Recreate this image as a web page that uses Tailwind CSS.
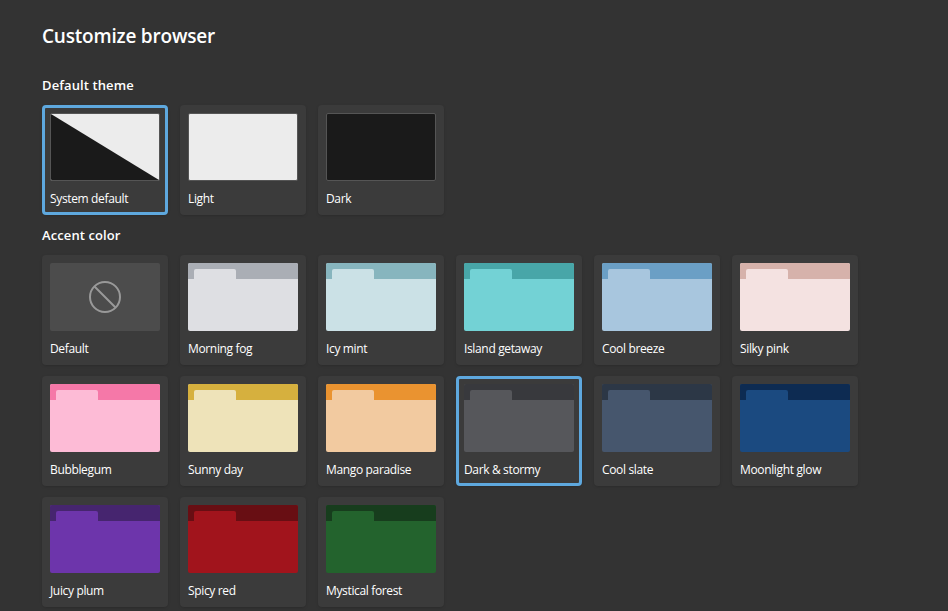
<!DOCTYPE html>
<html lang="en">
  <head>
    <meta charset="UTF-8" />
    <meta name="viewport" content="width=device-width, initial-scale=1.0" />
    <title>Customize browser</title>
    <script src="https://cdn.jsdelivr.net/npm/@tailwindcss/browser@4"></script>
  </head>
  <body class="bg-[#333333] text-white font-['Open_Sans',sans-serif] overflow-hidden h-[611px]">
    <div class="pl-[42px] pt-[24px]">
      <h1 class="text-[19px] leading-[24px] font-semibold tracking-[-0.2px]">Customize browser</h1>

      <!-- Default theme -->
      <h2 class="text-[13px] leading-[18px] font-semibold tracking-[0.1px] mt-[28px]">Default theme</h2>
      <div class="flex gap-3 mt-[11px]">
        <div class="w-[126px] h-[110px] rounded bg-[#3b3b3b] border-[3px] border-[#5ea8de] px-[5px] pt-[5px] shadow">
          <div class="h-[68px] rounded-[2px] border border-[#555555] overflow-hidden bg-[#ececec]">
            <svg class="w-full h-full" viewBox="0 0 108 66" preserveAspectRatio="none"><polygon points="0,0 108,66 0,66" fill="#1a1a1a" /></svg>
          </div>
          <div class="text-xs tracking-[-0.35px] mt-[9px] leading-[18px]">System default</div>
        </div>
        <div class="w-[126px] h-[110px] rounded bg-[#3b3b3b] px-2 pt-2 shadow">
          <div class="h-[68px] rounded-[2px] border border-[#555555] bg-[#ececec]"></div>
          <div class="text-xs tracking-[-0.35px] mt-[9px] leading-[18px]">Light</div>
        </div>
        <div class="w-[126px] h-[110px] rounded bg-[#3b3b3b] px-2 pt-2 shadow">
          <div class="h-[68px] rounded-[2px] border border-[#555555] bg-[#1a1a1a]"></div>
          <div class="text-xs tracking-[-0.35px] mt-[9px] leading-[18px]">Dark</div>
        </div>
      </div>

      <!-- Accent color -->
      <h2 class="text-[13px] leading-[18px] font-semibold tracking-[0.1px] mt-[11px]">Accent color</h2>
      <div class="grid grid-cols-[repeat(6,126px)] gap-x-3 gap-y-[11px] mt-[11px]">
        <div class="h-[110px] rounded bg-[#3b3b3b] px-2 pt-2 shadow">
          <div class="h-[68px] rounded-[2px] bg-[#4c4c4c] flex items-center justify-center">
            <svg class="w-8 h-8" viewBox="0 0 32 32" fill="none" stroke="#999999" stroke-width="2"><circle cx="16" cy="16" r="15" /><path d="M5.5 5.5 26.5 26.5" /></svg>
          </div>
          <div class="text-xs tracking-[-0.35px] mt-[9px] leading-[18px]">Default</div>
        </div>

        <div class="h-[110px] rounded bg-[#3b3b3b] px-2 pt-2 shadow">
          <div class="h-[68px] rounded-[2px] overflow-hidden flex flex-col bg-[#dedfe3]">
            <div class="h-4 bg-[#aaaeb5] pl-1.5 pt-1.5"><div class="w-[42px] h-2.5 rounded-t-[2px] bg-[#dedfe3]"></div></div>
          </div>
          <div class="text-xs tracking-[-0.35px] mt-[9px] leading-[18px]">Morning fog</div>
        </div>
        <div class="h-[110px] rounded bg-[#3b3b3b] px-2 pt-2 shadow">
          <div class="h-[68px] rounded-[2px] overflow-hidden flex flex-col bg-[#cbe1e6]">
            <div class="h-4 bg-[#87b5be] pl-1.5 pt-1.5"><div class="w-[42px] h-2.5 rounded-t-[2px] bg-[#cbe1e6]"></div></div>
          </div>
          <div class="text-xs tracking-[-0.35px] mt-[9px] leading-[18px]">Icy mint</div>
        </div>
        <div class="h-[110px] rounded bg-[#3b3b3b] px-2 pt-2 shadow">
          <div class="h-[68px] rounded-[2px] overflow-hidden flex flex-col bg-[#73d2d5]">
            <div class="h-4 bg-[#48a6a8] pl-1.5 pt-1.5"><div class="w-[42px] h-2.5 rounded-t-[2px] bg-[#73d2d5]"></div></div>
          </div>
          <div class="text-xs tracking-[-0.35px] mt-[9px] leading-[18px]">Island getaway</div>
        </div>
        <div class="h-[110px] rounded bg-[#3b3b3b] px-2 pt-2 shadow">
          <div class="h-[68px] rounded-[2px] overflow-hidden flex flex-col bg-[#a8c6de]">
            <div class="h-4 bg-[#6b9fc5] pl-1.5 pt-1.5"><div class="w-[42px] h-2.5 rounded-t-[2px] bg-[#a8c6de]"></div></div>
          </div>
          <div class="text-xs tracking-[-0.35px] mt-[9px] leading-[18px]">Cool breeze</div>
        </div>
        <div class="h-[110px] rounded bg-[#3b3b3b] px-2 pt-2 shadow">
          <div class="h-[68px] rounded-[2px] overflow-hidden flex flex-col bg-[#f4e2e1]">
            <div class="h-4 bg-[#d6b2ab] pl-1.5 pt-1.5"><div class="w-[42px] h-2.5 rounded-t-[2px] bg-[#f4e2e1]"></div></div>
          </div>
          <div class="text-xs tracking-[-0.35px] mt-[9px] leading-[18px]">Silky pink</div>
        </div>

        <div class="h-[110px] rounded bg-[#3b3b3b] px-2 pt-2 shadow">
          <div class="h-[68px] rounded-[2px] overflow-hidden flex flex-col bg-[#fdbbd6]">
            <div class="h-4 bg-[#f578a8] pl-1.5 pt-1.5"><div class="w-[42px] h-2.5 rounded-t-[2px] bg-[#fdbbd6]"></div></div>
          </div>
          <div class="text-xs tracking-[-0.35px] mt-[9px] leading-[18px]">Bubblegum</div>
        </div>
        <div class="h-[110px] rounded bg-[#3b3b3b] px-2 pt-2 shadow">
          <div class="h-[68px] rounded-[2px] overflow-hidden flex flex-col bg-[#eee3b9]">
            <div class="h-4 bg-[#d6b03e] pl-1.5 pt-1.5"><div class="w-[42px] h-2.5 rounded-t-[2px] bg-[#eee3b9]"></div></div>
          </div>
          <div class="text-xs tracking-[-0.35px] mt-[9px] leading-[18px]">Sunny day</div>
        </div>
        <div class="h-[110px] rounded bg-[#3b3b3b] px-2 pt-2 shadow">
          <div class="h-[68px] rounded-[2px] overflow-hidden flex flex-col bg-[#f2caa0]">
            <div class="h-4 bg-[#ea9330] pl-1.5 pt-1.5"><div class="w-[42px] h-2.5 rounded-t-[2px] bg-[#f2caa0]"></div></div>
          </div>
          <div class="text-xs tracking-[-0.35px] mt-[9px] leading-[18px]">Mango paradise</div>
        </div>
        <div class="h-[110px] rounded bg-[#3b3b3b] border-[3px] border-[#5ea8de] px-[5px] pt-[5px] shadow">
          <div class="h-[68px] rounded-[2px] overflow-hidden flex flex-col bg-[#56575b]">
            <div class="h-4 bg-[#38393d] pl-1.5 pt-1.5"><div class="w-[42px] h-2.5 rounded-t-[2px] bg-[#56575b]"></div></div>
          </div>
          <div class="text-xs tracking-[-0.35px] mt-[9px] leading-[18px]">Dark &amp; stormy</div>
        </div>
        <div class="h-[110px] rounded bg-[#3b3b3b] px-2 pt-2 shadow">
          <div class="h-[68px] rounded-[2px] overflow-hidden flex flex-col bg-[#46566d]">
            <div class="h-4 bg-[#2c3746] pl-1.5 pt-1.5"><div class="w-[42px] h-2.5 rounded-t-[2px] bg-[#46566d]"></div></div>
          </div>
          <div class="text-xs tracking-[-0.35px] mt-[9px] leading-[18px]">Cool slate</div>
        </div>
        <div class="h-[110px] rounded bg-[#3b3b3b] px-2 pt-2 shadow">
          <div class="h-[68px] rounded-[2px] overflow-hidden flex flex-col bg-[#1b4a80]">
            <div class="h-4 bg-[#0d2b52] pl-1.5 pt-1.5"><div class="w-[42px] h-2.5 rounded-t-[2px] bg-[#1b4a80]"></div></div>
          </div>
          <div class="text-xs tracking-[-0.35px] mt-[9px] leading-[18px]">Moonlight glow</div>
        </div>

        <div class="h-[110px] rounded bg-[#3b3b3b] px-2 pt-2 shadow">
          <div class="h-[68px] rounded-[2px] overflow-hidden flex flex-col bg-[#6d35ab]">
            <div class="h-4 bg-[#46256f] pl-1.5 pt-1.5"><div class="w-[42px] h-2.5 rounded-t-[2px] bg-[#6d35ab]"></div></div>
          </div>
          <div class="text-xs tracking-[-0.35px] mt-[9px] leading-[18px]">Juicy plum</div>
        </div>
        <div class="h-[110px] rounded bg-[#3b3b3b] px-2 pt-2 shadow">
          <div class="h-[68px] rounded-[2px] overflow-hidden flex flex-col bg-[#a1141c]">
            <div class="h-4 bg-[#680e13] pl-1.5 pt-1.5"><div class="w-[42px] h-2.5 rounded-t-[2px] bg-[#a1141c]"></div></div>
          </div>
          <div class="text-xs tracking-[-0.35px] mt-[9px] leading-[18px]">Spicy red</div>
        </div>
        <div class="h-[110px] rounded bg-[#3b3b3b] px-2 pt-2 shadow">
          <div class="h-[68px] rounded-[2px] overflow-hidden flex flex-col bg-[#23632d]">
            <div class="h-4 bg-[#173d1d] pl-1.5 pt-1.5"><div class="w-[42px] h-2.5 rounded-t-[2px] bg-[#23632d]"></div></div>
          </div>
          <div class="text-xs tracking-[-0.35px] mt-[9px] leading-[18px]">Mystical forest</div>
        </div>
      </div>
    </div>
  </body>
</html>
